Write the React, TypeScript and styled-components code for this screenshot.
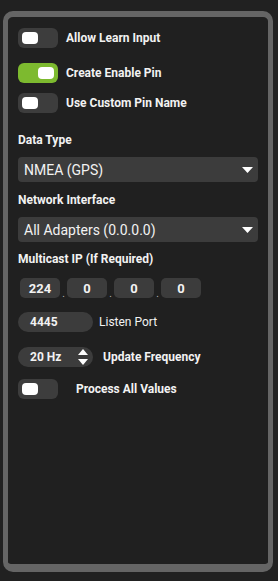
import React from 'react';
import styled, { createGlobalStyle } from 'styled-components';

const GlobalStyle = createGlobalStyle`
  html, body {
    margin: 0;
    padding: 0;
    background: #212121;
  }
  body {
    font-family: Roboto, 'Liberation Sans', sans-serif;
    color: #ffffff;
  }
`;

type ToggleProps = { on?: boolean };

const Toggle: React.FC<ToggleProps> = ({ on }) => (
  <Track $on={on}>
    <Knob $on={on} />
  </Track>
);

const Spinner = () => (
  <svg width="10" height="16" viewBox="0 0 10 16">
    <path d="M0 6 L5 0 L10 6 Z" fill="#ffffff" />
    <path d="M0 10 L5 16 L10 10 Z" fill="#ffffff" />
  </svg>
);

const Caret = () => (
  <svg width="11" height="6" viewBox="0 0 11 6">
    <path d="M0 0 L11 0 L5.5 6 Z" fill="#ffffff" />
  </svg>
);

const App: React.FC = () => {
  return (
    <>
      <GlobalStyle />
      <Frame>
        <Row $top={0}>
          <Toggle />
          <Label $gap={8}>Allow Learn Input</Label>
        </Row>
        <Row $top={15}>
          <Toggle on />
          <Label $gap={8}>Create Enable Pin</Label>
        </Row>
        <Row $top={10}>
          <Toggle />
          <Label $gap={8}>Use Custom Pin Name</Label>
        </Row>

        <Heading $top={19}>Data Type</Heading>
        <Select $top={9}>
          <span>NMEA (GPS)</span>
          <Caret />
        </Select>

        <Heading $top={10}>Network Interface</Heading>
        <Select $top={9}>
          <span>All Adapters (0.0.0.0)</span>
          <Caret />
        </Select>

        <Heading $top={9}>Multicast IP (If Required)</Heading>
        <IpRow>
          <IpBox>224</IpBox>
          <Dot>.</Dot>
          <IpBox>0</IpBox>
          <Dot>.</Dot>
          <IpBox>0</IpBox>
          <Dot>.</Dot>
          <IpBox>0</IpBox>
        </IpRow>

        <Row $top={14}>
          <NumberBox>4445</NumberBox>
          <Label $gap={6} $regular>Listen Port</Label>
        </Row>
        <Row $top={15}>
          <NumberBox>
            <span>20 Hz</span>
            <Spinner />
          </NumberBox>
          <Label $gap={10}>Update Frequency</Label>
        </Row>
        <Row $top={12}>
          <Toggle />
          <Label $gap={18}>Process All Values</Label>
        </Row>
      </Frame>
    </>
  );
};

export default App;

// Styled Components
const Frame = styled.div`
  box-sizing: border-box;
  margin: 11px 5px 9px 3px;
  height: 561px;
  border-style: solid;
  border-color: #656565;
  border-width: 6px 5px 8px 5px;
  border-radius: 10px;
  background: #202020;
  padding: 11px 10px 0 10px;
  display: flex;
  flex-direction: column;
  align-items: flex-start;
`;

const Row = styled.div<{ $top: number }>`
  display: flex;
  align-items: center;
  margin-top: ${(p) => p.$top}px;
`;

const Track = styled.div<{ $on?: boolean }>`
  box-sizing: border-box;
  width: 40px;
  height: 20px;
  border-radius: 6px;
  background: ${(p) => (p.$on ? '#7dba2f' : '#3d3d3d')};
  padding: 4px;
  display: flex;
  justify-content: ${(p) => (p.$on ? 'flex-end' : 'flex-start')};
`;

const Knob = styled.div<{ $on?: boolean }>`
  width: 16px;
  height: 12px;
  border-radius: 4px;
  background: #ffffff;
`;

const Label = styled.span<{ $gap: number; $regular?: boolean }>`
  margin-left: ${(p) => p.$gap}px;
  font-size: 12px;
  font-weight: ${(p) => (p.$regular ? 400 : 700)};
  color: #f2f2f2;
`;

const Heading = styled.div<{ $top: number }>`
  margin-top: ${(p) => p.$top}px;
  height: 16px;
  line-height: 16px;
  font-size: 12px;
  font-weight: 700;
  color: #f2f2f2;
`;

const Select = styled.div<{ $top: number }>`
  box-sizing: border-box;
  margin-top: ${(p) => p.$top}px;
  width: 240px;
  height: 25px;
  border-radius: 4px;
  background: #3c3c3c;
  padding: 0 5px 0 6px;
  display: flex;
  align-items: center;
  justify-content: space-between;
  font-size: 14px;
  color: #f2f2f2;
`;

const IpRow = styled.div`
  display: flex;
  align-items: flex-end;
  margin-top: 11px;
  margin-left: 2px;
`;

const IpBox = styled.div`
  width: 40px;
  height: 20px;
  border-radius: 5px;
  background: #3c3c3c;
  display: flex;
  align-items: center;
  justify-content: center;
  font-size: 13px;
  font-weight: 700;
  color: #f2f2f2;
`;

const Dot = styled.span`
  width: 7px;
  text-align: center;
  font-size: 10px;
  line-height: 8px;
  color: #bdbdbd;
`;

const NumberBox = styled.div`
  box-sizing: border-box;
  width: 75px;
  height: 20px;
  border-radius: 10px;
  background: #3c3c3c;
  padding: 0 5px 0 12px;
  display: flex;
  align-items: center;
  justify-content: space-between;
  font-size: 12px;
  font-weight: 700;
  color: #f2f2f2;
`;
